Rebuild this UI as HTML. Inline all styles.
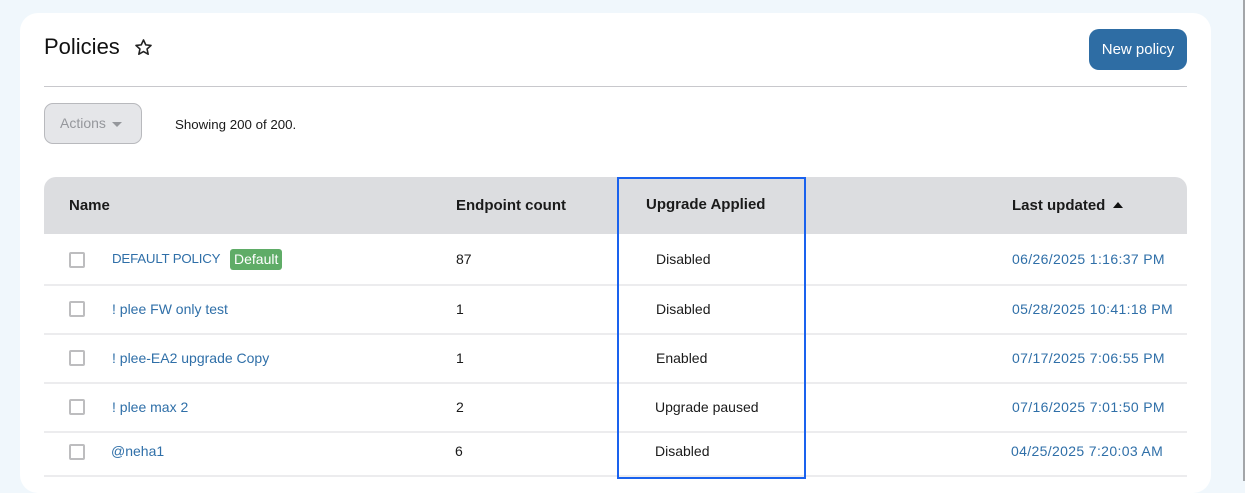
<!DOCTYPE html>
<html><head><meta charset="utf-8"><style>
*{margin:0;padding:0;box-sizing:border-box}
body{width:1245px;height:481px;background:#f0f7fc;font-family:"Liberation Sans",sans-serif;position:relative;overflow:hidden;color:#1a1a1a}
.card{position:absolute;left:20px;top:13px;width:1191px;height:480px;background:#fff;border-radius:18px}
.a{position:absolute;white-space:nowrap}
.link{color:#2f6fa8;font-size:14px}
.cell{font-size:14px;color:#1a1a1a}
.hd{font-size:15px;font-weight:bold;color:#1a1a1a}
.sep{position:absolute;left:44px;width:1143px;height:2px;background:#ececee}
.cb{position:absolute;left:69px;width:16px;height:16px;border:2px solid #bdbdbf;border-radius:2px;background:#fff}
.dt{letter-spacing:0.35px}
</style></head><body>
<div class="card"></div>
<div class="a" style="left:44px;top:34px;font-size:22px;color:#111">Policies</div>
<svg class="a" style="left:134px;top:38px" width="19" height="19" viewBox="0 0 24 24"><path d="M12 2.5l2.9 6.2 6.6.7-5 4.5 1.4 6.6L12 17.1l-5.9 3.4 1.4-6.6-5-4.5 6.6-.7z" fill="none" stroke="#222" stroke-width="2" stroke-linejoin="round"/></svg>
<div class="a" style="left:1089px;top:29px;width:98px;height:41px;background:#2e6da4;border-radius:10px;color:#fff;font-size:15px;line-height:41px;text-align:center">New policy</div>
<div class="a" style="left:44px;top:86px;width:1143px;height:1px;background:#c8c8cc"></div>
<div class="a" style="left:44px;top:103px;width:98px;height:41px;background:#e5e6e9;border:1px solid #b8b9bd;border-radius:9px;color:#95979c;font-size:14px;line-height:39px;padding-left:15px">Actions <span style="display:inline-block;width:0;height:0;border-left:5px solid transparent;border-right:5px solid transparent;border-top:5px solid #95979c;vertical-align:middle;margin-left:2px"></span></div>
<div class="a" style="left:175px;top:117px;font-size:13.3px">Showing 200 of 200.</div>
<div class="a" style="left:44px;top:177px;width:1143px;height:57px;background:#dcdde0;border-radius:12px 12px 0 0"></div>
<div class="a hd" style="left:69px;top:197px">Name</div>
<div class="a hd" style="left:456px;top:197px">Endpoint count</div>
<div class="a hd" style="left:646px;top:196px">Upgrade Applied</div>
<div class="a hd" style="left:1012px;top:197px">Last updated <span style="display:inline-block;width:0;height:0;border-left:5px solid transparent;border-right:5px solid transparent;border-bottom:6px solid #111;vertical-align:middle;margin-left:3px;margin-top:-3px"></span></div>
<div class="sep" style="top:284px"></div>
<div class="sep" style="top:333px"></div>
<div class="sep" style="top:382px"></div>
<div class="sep" style="top:431px"></div>
<div class="sep" style="top:475px"></div>
<div class="cb" style="top:252px"></div>
<div class="cb" style="top:301px"></div>
<div class="cb" style="top:350px"></div>
<div class="cb" style="top:399px"></div>
<div class="cb" style="top:444px"></div>
<div class="a link" style="left:112px;top:251px;font-size:13.3px;letter-spacing:-0.2px">DEFAULT POLICY</div>
<div class="a" style="left:230px;top:249px;background:#5fac67;color:#fff;font-size:14px;padding:1px 4px;border-radius:3px;height:21px;line-height:19px">Default</div>
<div class="a link" style="left:112px;top:301px">! plee FW only test</div>
<div class="a link" style="left:112px;top:350px">! plee-EA2 upgrade Copy</div>
<div class="a link" style="left:112px;top:399px">! plee max 2</div>
<div class="a link" style="left:111px;top:443px">@neha1</div>
<div class="a cell" style="left:456px;top:251px">87</div>
<div class="a cell" style="left:456px;top:301px">1</div>
<div class="a cell" style="left:456px;top:350px">1</div>
<div class="a cell" style="left:456px;top:399px">2</div>
<div class="a cell" style="left:455px;top:443px">6</div>
<div class="a cell" style="left:656px;top:251px">Disabled</div>
<div class="a cell" style="left:656px;top:301px">Disabled</div>
<div class="a cell" style="left:656px;top:350px">Enabled</div>
<div class="a cell" style="left:655px;top:399px">Upgrade paused</div>
<div class="a cell" style="left:655px;top:443px">Disabled</div>
<div class="a link dt" style="left:1012px;top:251px">06/26/2025 1:16:37 PM</div>
<div class="a link dt" style="left:1012px;top:301px">05/28/2025 10:41:18 PM</div>
<div class="a link dt" style="left:1012px;top:350px">07/17/2025 7:06:55 PM</div>
<div class="a link dt" style="left:1012px;top:399px">07/16/2025 7:01:50 PM</div>
<div class="a link dt" style="left:1011px;top:443px">04/25/2025 7:20:03 AM</div>
<div class="a" style="left:617px;top:177px;width:189px;height:302px;border:2px solid #1a62ee"></div>
<div class="a" style="left:1243px;top:0;width:2px;height:481px;background:#555;opacity:.5"></div>
</body></html>
